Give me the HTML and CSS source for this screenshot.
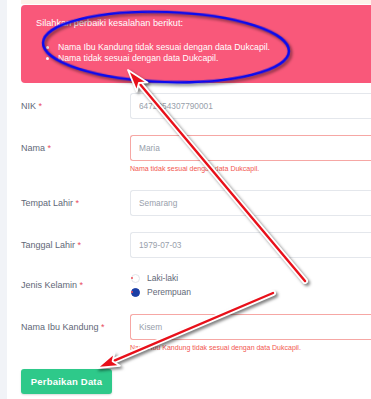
FILE: index.html
```html
<!DOCTYPE html>
<html lang="id">
<head>
  <meta charset="UTF-8">
  <title>Perbaikan Data</title>
  <link rel="stylesheet" href="styles.css">
</head>
<body>
  <div class="content">
    <div class="notice"></div>

    <div class="alert">
      <p>Silahkan perbaiki kesalahan berikut:</p>
      <ul>
        <li>Nama Ibu Kandung tidak sesuai dengan data Dukcapil.</li>
        <li>Nama tidak sesuai dengan data Dukcapil.</li>
      </ul>
    </div>

    <form class="form">
      <div class="form-row">
        <label class="form-label">NIK <span class="req">*</span></label>
        <div class="field">
          <input class="input" type="text" value="6472054307790001">
        </div>
      </div>

      <div class="form-row">
        <label class="form-label">Nama <span class="req">*</span></label>
        <div class="field">
          <input class="input invalid" type="text" value="Maria">
          <div class="error">Nama tidak sesuai dengan data Dukcapil.</div>
        </div>
      </div>

      <div class="form-row">
        <label class="form-label">Tempat Lahir <span class="req">*</span></label>
        <div class="field">
          <input class="input" type="text" value="Semarang">
        </div>
      </div>

      <div class="form-row">
        <label class="form-label">Tanggal Lahir <span class="req">*</span></label>
        <div class="field">
          <input class="input" type="text" value="1979-07-03">
        </div>
      </div>

      <div class="form-row radio-row">
        <label class="form-label">Jenis Kelamin <span class="req">*</span></label>
        <div class="field">
          <div class="radio"><span class="dot"></span>Laki-laki</div>
          <div class="radio"><span class="dot checked"></span>Perempuan</div>
        </div>
      </div>

      <div class="form-row">
        <label class="form-label">Nama Ibu Kandung <span class="req">*</span></label>
        <div class="field">
          <input class="input invalid" type="text" value="Kisem">
          <div class="error">Nama Ibu Kandung tidak sesuai dengan data Dukcapil.</div>
        </div>
      </div>

      <button class="btn" type="button">Perbaikan Data</button>
    </form>
  </div>

  <!-- coretan penanda di atas screenshot -->
  <svg class="annotation" width="371" height="399" viewBox="0 0 371 399">
    <ellipse cx="166" cy="47" rx="123" ry="35" transform="rotate(2 166 47)"
             fill="none" stroke="#0a0af0" stroke-width="2.6"/>
    <g class="arrow">
      <line x1="305" y1="281" x2="139" y2="83" stroke="#fff" stroke-width="6" stroke-linecap="round"/>
      <line x1="305" y1="281" x2="139" y2="83" stroke="#e8101a" stroke-width="2.4" stroke-linecap="round"/>
      <polygon points="128,70 147.5,82.4 138.9,83 136.7,91.4" fill="#e8101a" stroke="#fff" stroke-width="1.8" stroke-linejoin="round"/>
    </g>
    <g class="arrow">
      <line x1="273" y1="293" x2="112.6" y2="361.3" stroke="#fff" stroke-width="6" stroke-linecap="round"/>
      <line x1="273" y1="293" x2="112.6" y2="361.3" stroke="#e8101a" stroke-width="2.4" stroke-linecap="round"/>
      <polygon points="97,368 114.5,353 112.6,361.3 119.9,365.8" fill="#e8101a" stroke="#fff" stroke-width="1.8" stroke-linejoin="round"/>
    </g>
  </svg>
</body>
</html>
```

FILE: styles.css
```css
html, body {
  overflow: hidden;
}

body {
  margin: 0;
  background: #f1f3f7;
  font-family: 'Liberation Sans', Arial, sans-serif;
}

/* the panel is cut off at the right edge of the window */
.content {
  box-sizing: border-box;
  margin-left: 7px;
  height: 399px;
  padding: 0 0 0 14px;
  background: #fff;
}

.notice {
  height: 4px;
  margin-bottom: 1px;
  background: #fcf3ea;
}

.alert {
  background: #f9587a;
  color: #fff;
  border-radius: 4px 0 0 4px;
  padding: 11.5px 15px 19.5px;
}

.alert p {
  margin: 0;
  font-size: 9.2px;
  line-height: 13px;
}

.alert ul {
  margin: 12px 0 0;
  padding-left: 22px;
  font-size: 8.7px;
  line-height: 11px;
}

.form {
  margin-top: 10px;
}

.form-row {
  display: flex;
  margin-bottom: 16px;
}

.form-label {
  flex: none;
  width: 109px;
  font-size: 9px;
  line-height: 26px;
  color: #5f6877;
}

.req {
  color: #e84a5f;
}

.field {
  flex: 1;
  min-width: 0;
}

.input {
  display: block;
  box-sizing: border-box;
  width: 100%;
  height: 26px;
  margin: 0;
  padding: 0 8px;
  border: 1px solid #e4e7ec;
  border-right: none;
  border-radius: 3px 0 0 3px;
  background: #fff;
  font-family: 'Liberation Sans', Arial, sans-serif;
  font-size: 8.3px;
  color: #98a0ab;
}

.input.invalid {
  border-color: #f6a7a4;
}

.error {
  margin-top: 2px;
  font-size: 7px;
  line-height: 11px;
  color: #f2564f;
}

.radio-row {
  align-items: center;
  margin-top: -3px;
  margin-bottom: 15px;
}

.radio {
  display: flex;
  align-items: center;
  gap: 7px;
  height: 14px;
  font-size: 8.5px;
  color: #5f6877;
}

.dot {
  position: relative;
  box-sizing: border-box;
  width: 9px;
  height: 9px;
  margin-left: 1px;
  border: 1px solid #e2e5ea;
  border-radius: 50%;
  background: #fff;
}

.dot::before {
  content: '';
  position: absolute;
  left: -1px;
  top: 2px;
  width: 2px;
  height: 2px;
  border-radius: 50%;
  background: #f0505a;
}

.dot.checked {
  border-color: #1b3fa6;
  background: #1b3fa6;
}

.btn {
  display: block;
  width: 91px;
  height: 25px;
  padding: 0;
  border: none;
  border-radius: 3px;
  background: #2ec98a;
  box-shadow: 0 1px 2px rgba(0, 0, 0, 0.15);
  color: #fff;
  font-family: 'Liberation Sans', Arial, sans-serif;
  font-size: 9.5px;
  font-weight: bold;
  letter-spacing: 0.2px;
}

.annotation {
  position: absolute;
  top: 0;
  left: 0;
  pointer-events: none;
}

.annotation ellipse,
.annotation .arrow {
  filter: drop-shadow(2px 2px 1.5px rgba(0, 0, 0, 0.5));
}
```
